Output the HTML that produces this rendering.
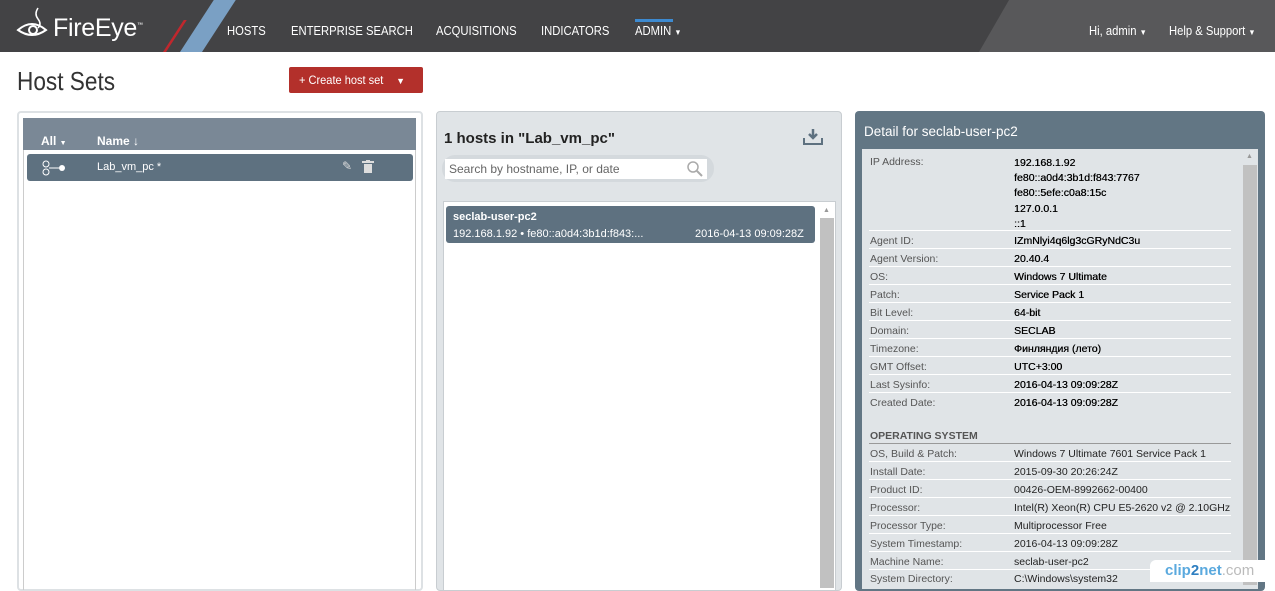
<!DOCTYPE html>
<html><head><meta charset="utf-8"><style>
*{box-sizing:border-box;margin:0;padding:0}
body{width:1275px;height:582px;overflow:hidden;background:#fff;font-family:"Liberation Sans",sans-serif;position:relative;font-size:11px;color:#333}
.abs{position:absolute}
.hdr{left:0;top:0;width:1275px;height:52px;background:#434345;overflow:hidden}
.nav{color:#fff;font-size:12.5px;top:24px;transform:scaleX(0.9);transform-origin:0 0;white-space:nowrap}
.lbl{position:absolute;left:870px;color:#555;font-size:10.5px}
.val{position:absolute;left:1014px;color:#222;font-size:10.5px}
.vb{color:#000;text-shadow:0.3px 0 0 #000}
.b{font-weight:bold}
.ln{position:absolute;left:869px;width:362px;height:1px;background:#fff}
</style></head><body>
<div class="abs hdr">
 <div class="abs" style="left:979px;top:0;width:320px;height:52px;background:#58585a;transform:skewX(-30deg);transform-origin:0 52px"></div>
 <div class="abs" style="left:180px;top:0;width:22px;height:52px;background:#7aa0c4;transform:skewX(-33deg);transform-origin:0 52px"></div>
 <div class="abs" style="left:163px;top:20px;width:3px;height:32px;background:#c0272d;transform:skewX(-33deg);transform-origin:0 32px"></div>
 <svg class="abs" style="left:16px;top:6px" width="36" height="36" viewBox="0 0 36 36"><path d="M2 24 Q16 12 30 24 Q16 34 2 24Z" fill="none" stroke="#fff" stroke-width="2"/><circle cx="17" cy="24" r="4" fill="none" stroke="#fff" stroke-width="2"/><path d="M22 2 Q18 8 22 13 Q26 18 22 22" fill="none" stroke="#fff" stroke-width="1.5"/></svg>
 <div class="abs" style="left:53px;top:14px;color:#fff;font-size:25px;letter-spacing:-0.3px">FireEye<sup style="font-size:6px">™</sup></div>
 <div class="abs nav" style="left:227px">HOSTS</div>
 <div class="abs nav" style="left:291px">ENTERPRISE SEARCH</div>
 <div class="abs nav" style="left:436px">ACQUISITIONS</div>
 <div class="abs nav" style="left:541px">INDICATORS</div>
 <div class="abs" style="left:635px;top:19px;width:38px;height:3px;background:#3d8ad0"></div>
 <div class="abs nav" style="left:635px">ADMIN <span style="font-size:8px">▼</span></div>
 <div class="abs nav" style="left:1089px">Hi, admin <span style="font-size:8px">▼</span></div>
 <div class="abs nav" style="left:1169px">Help &amp; Support <span style="font-size:8px">▼</span></div>
</div>
<div class="abs" style="left:17px;top:66px;font-size:26px;color:#333;transform:scaleX(0.87);transform-origin:0 0">Host Sets</div>
<div class="abs" style="left:289px;top:67px;width:134px;height:26px;background:#b3302b;border-radius:2px;color:#fff;font-size:12px;padding:6px 0 0 10px;white-space:nowrap"><span style="display:inline-block;transform:scaleX(0.92);transform-origin:0 0">+ Create host set</span> <span style="font-size:9px;margin-left:2px">▼</span></div>

<div class="abs" style="left:17px;top:111px;width:406px;height:480px;border:2px solid #dde1e4;border-radius:4px;background:#fff"></div>
<div class="abs" style="left:23px;top:118px;width:393px;height:32px;background:#7a8896"></div>
<div class="abs" style="left:23px;top:150px;width:393px;height:440px;border-left:1px solid #ccc;border-right:1px solid #ccc"></div>
<div class="abs b" style="left:41px;top:134px;color:#fff;font-size:12px">All <span style="font-size:7px">▼</span></div>
<div class="abs b" style="left:97px;top:134px;color:#fff;font-size:12px">Name <span style="font-weight:normal">↓</span></div>
<div class="abs" style="left:27px;top:154px;width:386px;height:27px;background:#5e7180;border-radius:3px"></div>
<svg class="abs" style="left:41px;top:160px" width="26" height="16"><circle cx="5" cy="4" r="3" fill="none" stroke="#fff"/><circle cx="5" cy="12" r="3" fill="none" stroke="#fff"/><path d="M8 8H18" stroke="#fff"/><circle cx="21" cy="8" r="3" fill="#fff"/></svg>
<div class="abs" style="left:97px;top:161px;color:#fff;font-size:11px">Lab_vm_pc *</div>
<div class="abs" style="left:342px;top:159px;color:#ddd;font-size:12px">✎</div>
<svg class="abs" style="left:362px;top:160px" width="12" height="13"><rect x="0" y="1" width="12" height="2" fill="#ddd"/><rect x="4" y="0" width="4" height="2" fill="#ddd"/><path d="M2 4h8v9H2z" fill="#ddd"/></svg>

<div class="abs" style="left:436px;top:111px;width:406px;height:480px;border:1px solid #c8cdd1;border-radius:4px;background:#e0e4e7"></div>
<div class="abs b" style="left:444px;top:130px;font-size:15px;color:#222">1 hosts in "Lab_vm_pc"</div>
<svg class="abs" style="left:803px;top:128px" width="20" height="18"><path d="M10 1v9M6 6l4 4 4-4" stroke="#5e7180" stroke-width="2.5" fill="none"/><path d="M1 10v6h18v-6" stroke="#5e7180" stroke-width="2" fill="none"/></svg>
<div class="abs" style="left:442px;top:155px;width:272px;height:27px;border-radius:13px;background:#d4d9dd"></div>
<div class="abs" style="left:445px;top:159px;width:262px;height:20px;background:#fff;color:#666;font-size:12px;padding:3px 4px">Search by hostname, IP, or date</div>
<svg class="abs" style="left:687px;top:161px" width="16" height="16"><circle cx="6" cy="6" r="5" fill="none" stroke="#aaa" stroke-width="1.5"/><path d="M10 10l5 5" stroke="#aaa" stroke-width="2"/></svg>
<div class="abs" style="left:443px;top:201px;width:393px;height:390px;background:#fff;border:1px solid #c8cdd1"></div>
<div class="abs" style="left:820px;top:218px;width:14px;height:370px;background:#c1c1c1"></div>
<div class="abs" style="left:823px;top:207px;font-size:7px;color:#999">▲</div>
<div class="abs" style="left:446px;top:206px;width:369px;height:37px;background:#5e7180;border-radius:3px"></div>
<div class="abs b" style="left:453px;top:211px;color:#fff;font-size:11px">seclab-user-pc2</div>
<div class="abs" style="left:453px;top:228px;color:#fff;font-size:11px">192.168.1.92 • fe80::a0d4:3b1d:f843:...</div>
<div class="abs" style="left:695px;top:228px;color:#fff;font-size:11px">2016-04-13 09:09:28Z</div>

<div class="abs" style="left:855px;top:111px;width:410px;height:480px;background:#627684;border-radius:4px"></div>
<div class="abs" style="left:864px;top:124px;color:#fff;font-size:13.5px">Detail for seclab-user-pc2</div>
<div class="abs" style="left:862px;top:149px;width:396px;height:440px;background:#e0e4e7"></div>
<div class="abs" style="left:1243px;top:165px;width:14px;height:420px;background:#c1c1c1"></div>
<div class="abs" style="left:1246px;top:153px;font-size:7px;color:#999">▲</div>

<div class="lbl" style="top:156px">IP Address:</div>
<div class="val vb" style="top:156px;line-height:15.2px">192.168.1.92<br>fe80::a0d4:3b1d:f843:7767<br>fe80::5efe:c0a8:15c<br>127.0.0.1<br>::1</div>
<div class="ln" style="top:230px"></div>
<div class="lbl" style="top:235px">Agent ID:</div><div class="val vb" style="top:235px">IZmNlyi4q6lg3cGRyNdC3u</div><div class="ln" style="top:248px"></div>
<div class="lbl" style="top:253px">Agent Version:</div><div class="val vb" style="top:253px">20.40.4</div><div class="ln" style="top:266px"></div>
<div class="lbl" style="top:271px">OS:</div><div class="val vb" style="top:271px">Windows 7 Ultimate</div><div class="ln" style="top:284px"></div>
<div class="lbl" style="top:289px">Patch:</div><div class="val vb" style="top:289px">Service Pack 1</div><div class="ln" style="top:302px"></div>
<div class="lbl" style="top:307px">Bit Level:</div><div class="val vb" style="top:307px">64-bit</div><div class="ln" style="top:320px"></div>
<div class="lbl" style="top:325px">Domain:</div><div class="val vb" style="top:325px">SECLAB</div><div class="ln" style="top:338px"></div>
<div class="lbl" style="top:343px">Timezone:</div><div class="val vb" style="top:343px">Финляндия (лето)</div><div class="ln" style="top:356px"></div>
<div class="lbl" style="top:361px">GMT Offset:</div><div class="val vb" style="top:361px">UTC+3:00</div><div class="ln" style="top:374px"></div>
<div class="lbl" style="top:379px">Last Sysinfo:</div><div class="val vb" style="top:379px">2016-04-13 09:09:28Z</div><div class="ln" style="top:392px"></div>
<div class="lbl" style="top:397px">Created Date:</div><div class="val vb" style="top:397px">2016-04-13 09:09:28Z</div>
<div class="lbl b" style="top:430px">OPERATING SYSTEM</div>
<div class="ln" style="top:443px;background:#999"></div>
<div class="lbl" style="top:448px">OS, Build &amp; Patch:</div><div class="val" style="top:448px">Windows 7 Ultimate 7601 Service Pack 1</div><div class="ln" style="top:461px"></div>
<div class="lbl" style="top:466px">Install Date:</div><div class="val" style="top:466px">2015-09-30 20:26:24Z</div><div class="ln" style="top:479px"></div>
<div class="lbl" style="top:484px">Product ID:</div><div class="val" style="top:484px">00426-OEM-8992662-00400</div><div class="ln" style="top:497px"></div>
<div class="lbl" style="top:502px">Processor:</div><div class="val" style="top:502px">Intel(R) Xeon(R) CPU E5-2620 v2 @ 2.10GHz</div><div class="ln" style="top:515px"></div>
<div class="lbl" style="top:520px">Processor Type:</div><div class="val" style="top:520px">Multiprocessor Free</div><div class="ln" style="top:533px"></div>
<div class="lbl" style="top:538px">System Timestamp:</div><div class="val" style="top:538px">2016-04-13 09:09:28Z</div><div class="ln" style="top:551px"></div>
<div class="lbl" style="top:556px">Machine Name:</div><div class="val" style="top:556px">seclab-user-pc2</div><div class="ln" style="top:569px"></div>
<div class="lbl" style="top:573px">System Directory:</div><div class="val" style="top:573px">C:\Windows\system32</div>
<div class="abs" style="left:1150px;top:560px;width:125px;height:22px;background:#fff;border-radius:6px 0 0 0"></div>
<div class="abs b" style="left:1165px;top:562px;font-size:15px;color:#5aa9de">clip<span style="color:#2f7fc1">2</span>net<span style="color:#bbb;font-weight:normal">.com</span></div>
</body></html>
